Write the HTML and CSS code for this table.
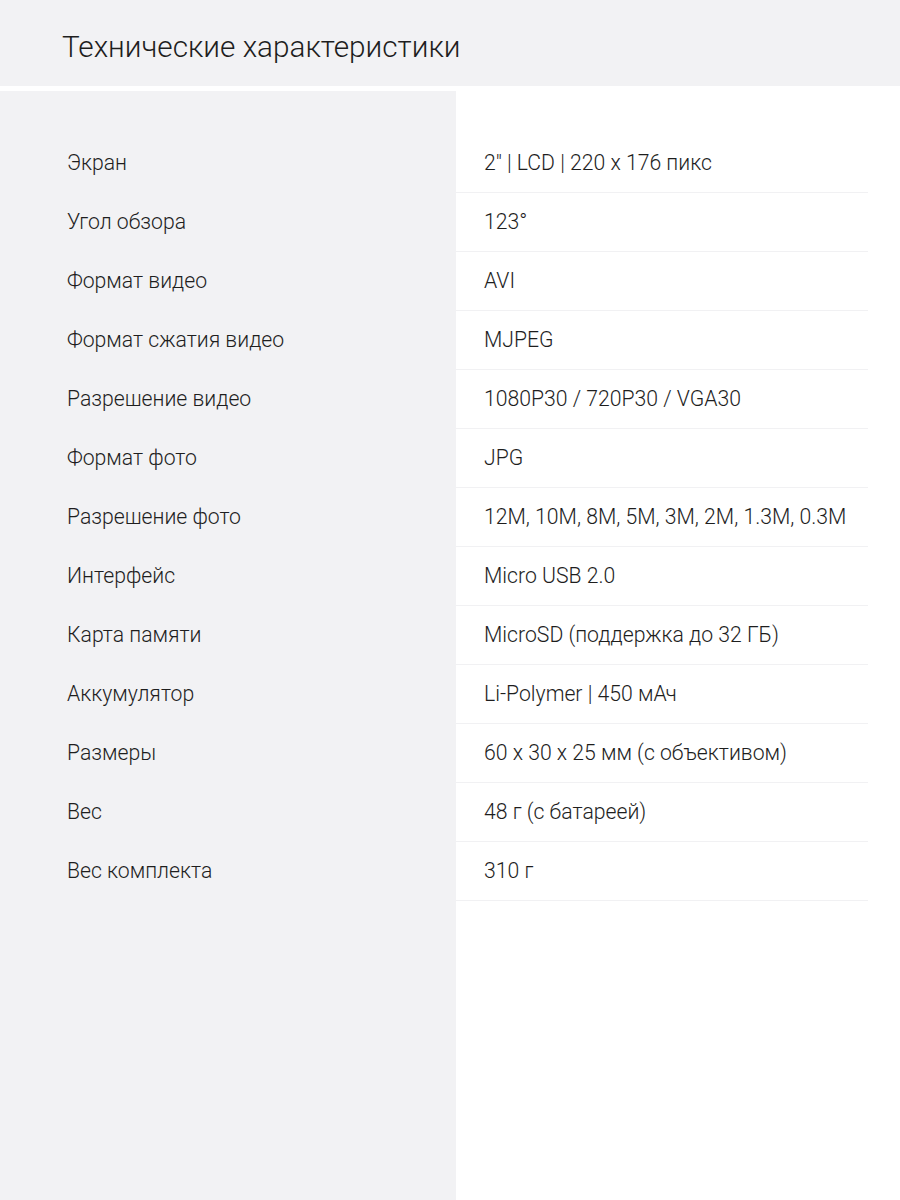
FILE: index.html
```html
<!DOCTYPE html>
<html lang="ru">
<head>
<meta charset="utf-8">
<title>Технические характеристики</title>
<link rel="stylesheet" href="styles.css">
</head>
<body>
<header class="header">
  <h1 class="title">Технические характеристики</h1>
</header>
<main class="specs">
  <div class="label">Экран</div><div class="value">2" | LCD | 220 x 176 пикс</div>
  <div class="label">Угол обзора</div><div class="value">123°</div>
  <div class="label">Формат видео</div><div class="value">AVI</div>
  <div class="label">Формат сжатия видео</div><div class="value">MJPEG</div>
  <div class="label">Разрешение видео</div><div class="value">1080P30 / 720P30 / VGA30</div>
  <div class="label">Формат фото</div><div class="value">JPG</div>
  <div class="label">Разрешение фото</div><div class="value">12M, 10M, 8M, 5M, 3M, 2M, 1.3M, 0.3M</div>
  <div class="label">Интерфейс</div><div class="value">Micro USB 2.0</div>
  <div class="label">Карта памяти</div><div class="value">MicroSD (поддержка до 32 ГБ)</div>
  <div class="label">Аккумулятор</div><div class="value">Li-Polymer | 450 мАч</div>
  <div class="label">Размеры</div><div class="value">60 x 30 x 25 мм (с объективом)</div>
  <div class="label">Вес</div><div class="value">48 г (с батареей)</div>
  <div class="label">Вес комплекта</div><div class="value">310 г</div>
</main>
</body>
</html>
```
FILE: styles.css
```css
html, body {
  margin: 0;
  padding: 0;
  background: #ffffff;
  font-family: Roboto, "Liberation Sans", sans-serif;
  color: #222222;
}

.header {
  background: #f2f2f4;
  height: 86px;
  margin-bottom: 5px;
  display: flex;
  align-items: center;
  padding-left: 62px;
}

.title {
  margin: 0;
  font-size: 29.7px;
  font-weight: 300;
  line-height: 1;
  color: #1e1e1e;
  padding-top: 8px;
}

.specs {
  display: grid;
  grid-template-columns: 456px 1fr;
  align-content: start;
  min-height: calc(100vh - 91px);
  padding-top: 43px;
  box-sizing: border-box;
  background: linear-gradient(to right, #f2f2f4 456px, #ffffff 456px);
}

.label,
.value {
  font-size: 21.2px;
  font-weight: 300;
  line-height: 58px;
  white-space: nowrap;
}

.label {
  padding-left: 67px;
  color: #1e1e1e;
}

.value {
  padding-left: 28px;
  margin-right: 32px;
  border-bottom: 1px solid #f1f1f3;
  color: #1e1e1e;
}
```
